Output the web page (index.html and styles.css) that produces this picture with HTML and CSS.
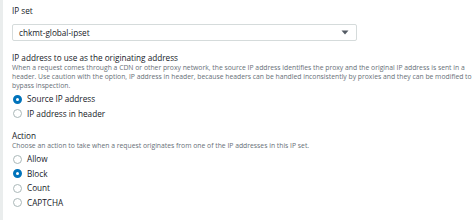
FILE: index.html
```html
<!DOCTYPE html>
<html>
<head>
<meta charset="utf-8">
<link rel="stylesheet" href="styles.css">
</head>
<body>
<div class="page">
  <div class="strip"></div>
  <div class="content">
    <div class="label">IP set</div>
    <div class="select">
      <span class="select-value">chkmt-global-ipset</span>
      <svg class="caret" width="8" height="5" viewBox="0 0 8 5"><path d="M0.5 0.5 H7.5 L4 4.5 Z" fill="#545b64"/></svg>
    </div>

    <div class="label title2">IP address to use as the originating address</div>
    <div class="desc">
      <span class="line">When a request comes through a CDN or other proxy network, the source IP address identifies the proxy and the original IP address is sent in a</span>
      <span class="line">header. Use caution with the option, IP address in header, because headers can be handled inconsistently by proxies and they can be modified to</span>
      <span class="line">bypass inspection.</span>
    </div>
    <div class="radios first">
      <div class="radio-row"><span class="radio on"></span><span class="rlabel">Source IP address</span></div>
      <div class="radio-row"><span class="radio"></span><span class="rlabel">IP address in header</span></div>
    </div>

    <div class="label title3">Action</div>
    <div class="desc">Choose an action to take when a request originates from one of the IP addresses in this IP set.</div>
    <div class="radios second">
      <div class="radio-row"><span class="radio"></span><span class="rlabel">Allow</span></div>
      <div class="radio-row"><span class="radio on"></span><span class="rlabel">Block</span></div>
      <div class="radio-row"><span class="radio"></span><span class="rlabel">Count</span></div>
      <div class="radio-row"><span class="radio"></span><span class="rlabel">CAPTCHA</span></div>
    </div>
  </div>
</div>
</body>
</html>
```
FILE: styles.css
```css
html, body {
  margin: 0;
  padding: 0;
  background: #ffffff;
}
body {
  font-family: "Open Sans", "Noto Sans", sans-serif;
  color: #16191f;
  width: 474px;
  height: 220px;
  overflow: hidden;
}
.page {
  display: flex;
  height: 220px;
}
.strip {
  width: 3px;
  flex: none;
  background: #eaeded;
}
.content {
  flex: 1;
  min-width: 0;
  padding: 6px 0 0 9px;
}
.label {
  font-size: 8.2px;
  line-height: 10px;
  color: #16191f;
}
.select {
  margin-top: 8px;
  width: 345px;
  height: 17px;
  box-sizing: border-box;
  border: 1px solid #d5dbdb;
  border-radius: 2px;
  display: flex;
  align-items: center;
  justify-content: space-between;
  padding: 0 7px 0 6px;
}
.select-value {
  font-size: 8.2px;
  line-height: 10px;
}
.caret {
  display: block;
}
.title2 {
  margin-top: 12px;
}
.desc {
  font-size: 6.8px;
  line-height: 9px;
  color: #687078;
}
.desc .line {
  display: block;
  white-space: nowrap;
}
.radios.first {
  margin-top: 2px;
}
.radios.second {
  margin-top: 2px;
}
.title3 {
  margin-top: 10px;
}
.radio-row {
  display: flex;
  align-items: center;
  height: 14.5px;
}
.radio {
  width: 9px;
  height: 9px;
  box-sizing: border-box;
  border-radius: 50%;
  border: 1px solid #aab7b8;
  margin-left: 1px;
  margin-right: 5px;
  flex: none;
}
.radio.on {
  border: 3px solid #0073bb;
  background: #ffffff;
}
.rlabel {
  font-size: 8.2px;
  line-height: 10px;
}
```
